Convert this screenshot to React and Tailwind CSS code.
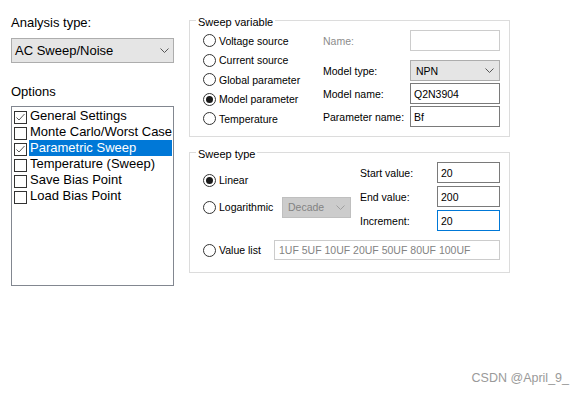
import React from "react";

const Radio = ({ checked }) => (
  <span className="w-[13px] h-[13px] rounded-full border border-[#333333] bg-white flex items-center justify-center flex-none">
    {checked && <span className="w-[7px] h-[7px] rounded-full bg-[#1a1a1a]" />}
  </span>
);

const Chevron = ({ color = "#555555" }) => (
  <svg width="9" height="5" viewBox="0 0 9 5" className="flex-none">
    <path d="M0.5 0.5 L4.5 4.5 L8.5 0.5" fill="none" stroke={color} strokeWidth="1" />
  </svg>
);

const Check = ({ checked }) => (
  <span className="w-[13px] h-[13px] border border-[#333333] bg-white flex-none mt-[3px] ml-[2px] flex items-center justify-center">
    {checked && (
      <svg width="11" height="11" viewBox="0 0 11 11">
        <path d="M1.5 5.5 L4 8 L9.5 2" fill="none" stroke="#5a5a5a" strokeWidth="1" />
      </svg>
    )}
  </span>
);

const GroupHeader = ({ title }) => (
  <div className="flex h-[14px]">
    <div className="w-[7px] mt-[5px] border-t border-l border-[#dcdcdc]" />
    <div className="px-[2px] leading-[14px] text-[11px]">{title}</div>
    <div className="flex-1 mt-[5px] border-t border-r border-[#dcdcdc]" />
  </div>
);

const listItems = [
  { label: "General Settings", checked: true },
  { label: "Monte Carlo/Worst Case", checked: false },
  { label: "Parametric Sweep", checked: true, selected: true },
  { label: "Temperature (Sweep)", checked: false },
  { label: "Save Bias Point", checked: false },
  { label: "Load Bias Point", checked: false },
];

const sweepVars = [
  { label: "Voltage source" },
  { label: "Current source" },
  { label: "Global parameter" },
  { label: "Model parameter", checked: true },
  { label: "Temperature" },
];

export default function App() {
  return (
    <div className="relative w-[585px] h-[395px] bg-white overflow-hidden text-black font-['Liberation_Sans',Arial,sans-serif]">
      <div className="flex">
        {/* Left column */}
        <div className="ml-[11px] w-[163px] pt-[15px] text-[13px] leading-[16px] flex-none">
          <div>Analysis type:</div>
          <div className="mt-[7px] h-[25px] bg-[#e5e5e5] border border-[#adadad] flex items-center pl-[3px] pr-[4px]">
            <span className="flex-1">AC Sweep/Noise</span>
            <Chevron />
          </div>
          <div className="mt-[21px]">Options</div>
          <div className="mt-[6px] h-[180px] border border-[#828790] bg-white pt-[1px]">
            {listItems.map((it) => (
              <div key={it.label} className="h-[16px] flex items-start">
                <Check checked={it.checked} />
                <div
                  className={
                    "ml-[2px] mr-[1px] flex-1 pl-[1px] h-[16px] leading-[16px] whitespace-nowrap overflow-hidden " +
                    (it.selected ? "bg-[#0078d7] text-white" : "")
                  }
                >
                  {it.label}
                </div>
              </div>
            ))}
          </div>
        </div>

        {/* Right column */}
        <div className="ml-[15px] w-[321px] pt-[15px] text-[10.5px] leading-[14px] flex-none">
          <GroupHeader title="Sweep variable" />
          <div className="h-[108px] border-x border-b border-[#dcdcdc] flex pl-[13px]">
            <div className="w-[120px] pt-[2px] flex flex-col flex-none">
              {sweepVars.map((v) => (
                <div key={v.label} className="h-[19.5px] flex items-center gap-[3px]">
                  <Radio checked={v.checked} />
                  <span>{v.label}</span>
                </div>
              ))}
            </div>
            <div className="pt-[1px] flex flex-col">
              <div className="flex items-center h-[21px]">
                <span className="w-[87px] text-[#8c8c8c]">Name:</span>
                <div className="w-[90px] h-[21px] border border-[#cccccc] bg-white" />
              </div>
              <div className="flex items-center h-[21px] mt-[9px]">
                <span className="w-[87px]">Model type:</span>
                <div className="w-[90px] h-[21px] border border-[#adadad] bg-[#e5e5e5] flex items-center pl-[5px] pr-[5px]">
                  <span className="flex-1">NPN</span>
                  <Chevron />
                </div>
              </div>
              <div className="flex items-center h-[21px] mt-[2px]">
                <span className="w-[87px]">Model name:</span>
                <div className="w-[90px] h-[21px] border border-[#7a7a7a] bg-white flex items-center pl-[3px]">Q2N3904</div>
              </div>
              <div className="flex items-center h-[21px] mt-[2px]">
                <span className="w-[87px]">Parameter name:</span>
                <div className="w-[90px] h-[21px] border border-[#7a7a7a] bg-white flex items-center pl-[3px]">Bf</div>
              </div>
            </div>
          </div>

          <div className="mt-[10px]">
            <GroupHeader title="Sweep type" />
            <div className="h-[112px] border-x border-b border-[#dcdcdc] pl-[13px] flex flex-col">
              <div className="flex">
                <div className="w-[156px] flex flex-col pt-[9px] flex-none">
                  <div className="h-[20px] flex items-center gap-[3px]">
                    <Radio checked />
                    <span>Linear</span>
                  </div>
                  <div className="mt-[6px] h-[22px] flex items-center">
                    <div className="w-[79px] flex items-center gap-[3px]">
                      <Radio />
                      <span>Logarithmic</span>
                    </div>
                    <div className="w-[69px] h-[21px] border border-[#bfbfbf] bg-[#cccccc] text-[#838383] flex items-center pl-[5px] pr-[5px]">
                      <span className="flex-1">Decade</span>
                      <Chevron color="#a0a0a0" />
                    </div>
                  </div>
                </div>
                <div className="pt-[1px] flex flex-col gap-[3px]">
                  <div className="h-[21px] flex items-center">
                    <span className="w-[78px] pl-[1px]">Start value:</span>
                    <div className="w-[63px] h-[21px] border border-[#7a7a7a] bg-white flex items-center pl-[3px]">20</div>
                  </div>
                  <div className="h-[21px] flex items-center">
                    <span className="w-[78px] pl-[1px]">End value:</span>
                    <div className="w-[63px] h-[21px] border border-[#7a7a7a] bg-white flex items-center pl-[3px]">200</div>
                  </div>
                  <div className="h-[21px] flex items-center">
                    <span className="w-[78px] pl-[1px]">Increment:</span>
                    <div className="w-[63px] h-[21px] border border-[#0078d7] bg-white flex items-center pl-[3px]">20</div>
                  </div>
                </div>
              </div>
              <div className="mt-[9px] h-[20px] flex items-center">
                <div className="w-[71px] flex items-center gap-[3px] flex-none">
                  <Radio />
                  <span>Value list</span>
                </div>
                <div className="w-[226px] h-[20px] border border-[#cccccc] bg-white text-[#838383] flex items-center pl-[4px] whitespace-nowrap">
                  1UF 5UF 10UF 20UF 50UF 80UF 100UF
                </div>
              </div>
            </div>
          </div>
        </div>
      </div>

      <div className="absolute right-[16px] bottom-[9px] text-[12.5px] leading-[15px] text-[#9a9a9a]">
        CSDN @April_9_
      </div>
    </div>
  );
}
